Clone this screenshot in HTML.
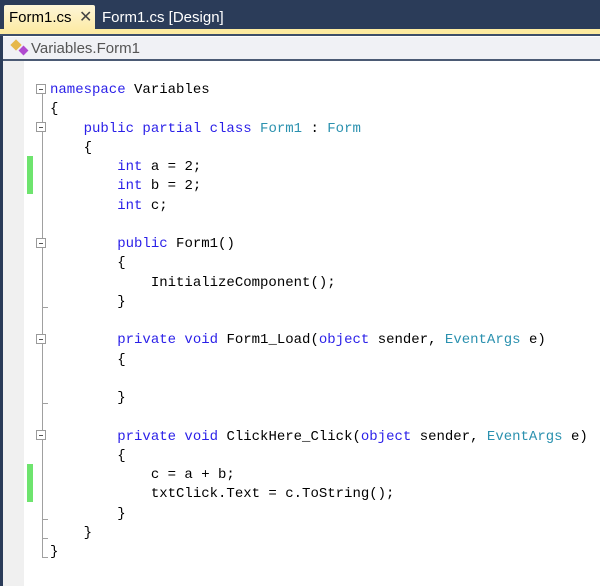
<!DOCTYPE html>
<html><head><style>
body{margin:0;width:600px;height:586px;overflow:hidden;background:#fff;position:relative;font-family:"Liberation Sans",sans-serif}
.a{position:absolute}
.code{position:absolute;left:50px;top:81px;font-family:"Liberation Mono",monospace;font-size:14px;line-height:19.25px;white-space:pre;color:#000}
.k{color:#2a1fe8}.t{color:#2b91af}
.box{position:absolute;left:36px;width:8px;height:8px;border:1px solid #9a9a9a;background:#fff}
.box:after{content:"";position:absolute;left:2px;top:3.5px;width:4px;height:1px;background:#555}
</style></head><body>
<div class="a" style="left:0;top:0;width:600px;height:29px;background:#2b3c59"></div>
<div class="a" style="left:0;top:29px;width:600px;height:5px;background:#fdeba0"></div>
<div class="a" style="left:0;top:34px;width:600px;height:2px;background:#3d4e6a"></div>
<div class="a" style="left:4px;top:5px;width:91px;height:29px;background:linear-gradient(#fdf6d8,#fde9a0);border-radius:2px 2px 0 0"></div>
<div class="a" style="left:9px;top:9px;font-size:15px;color:#000">Form1.cs</div>
<div class="a" style="left:79px;top:7px;font-size:16px;color:#444">✕</div>
<div class="a" style="left:102px;top:9px;font-size:15px;color:#fff">Form1.cs [Design]</div>
<div class="a" style="left:3px;top:36px;width:597px;height:23px;background:#f0f1f5;border-top:1px solid #fff"></div>
<div class="a" style="left:0;top:59px;width:600px;height:2px;background:#4b5a74"></div>
<div class="a" style="left:0;top:36px;width:3px;height:550px;background:#2b3c59"></div>
<div class="a" style="left:12px;top:41px;width:8px;height:8px;background:#e6b84a;transform:rotate(45deg)"></div>
<div class="a" style="left:20px;top:47px;width:7px;height:7px;background:#b04ad0;transform:rotate(45deg)"></div>
<div class="a" style="left:31px;top:40px;font-size:15px;color:#555">Variables.Form1</div>
<div class="a" style="left:3px;top:61px;width:21px;height:525px;background:#f0f0f0"></div>
<div class="a" style="left:27px;top:156px;width:6px;height:38px;background:#6ee46e"></div>
<div class="a" style="left:27px;top:464px;width:6px;height:38px;background:#6ee46e"></div>
<div class="a" style="left:42px;top:88px;width:1px;height:470px;background:#a0a0a0"></div>
<div class="a" style="left:42px;top:557px;width:6px;height:1px;background:#a0a0a0"></div>
<div class="a" style="left:42px;top:538px;width:6px;height:1px;background:#a0a0a0"></div>
<div class="a" style="left:42px;top:519px;width:6px;height:1px;background:#a0a0a0"></div>
<div class="a" style="left:42px;top:307px;width:6px;height:1px;background:#a0a0a0"></div>
<div class="a" style="left:42px;top:403px;width:6px;height:1px;background:#a0a0a0"></div>
<div class="box" style="top:84px"></div>
<div class="box" style="top:122px"></div>
<div class="box" style="top:238px"></div>
<div class="box" style="top:334px"></div>
<div class="box" style="top:430px"></div>
<div class="code"><span class="k">namespace</span> Variables
{
    <span class="k">public partial class</span> <span class="t">Form1</span> : <span class="t">Form</span>
    {
        <span class="k">int</span> a = 2;
        <span class="k">int</span> b = 2;
        <span class="k">int</span> c;

        <span class="k">public</span> Form1()
        {
            InitializeComponent();
        }

        <span class="k">private void</span> Form1_Load(<span class="k">object</span> sender, <span class="t">EventArgs</span> e)
        {

        }

        <span class="k">private void</span> ClickHere_Click(<span class="k">object</span> sender, <span class="t">EventArgs</span> e)
        {
            c = a + b;
            txtClick.Text = c.ToString();
        }
    }
}</div>
</body></html>
